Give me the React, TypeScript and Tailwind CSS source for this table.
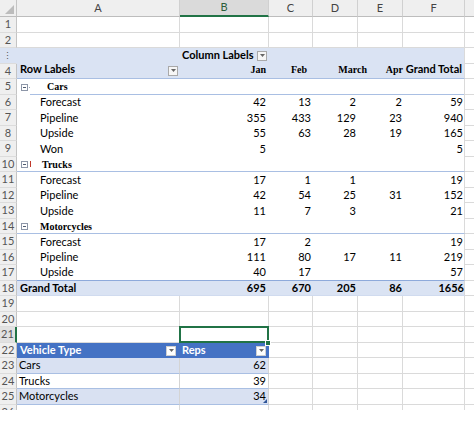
import React from "react";

// column widths A..F
const COLS = ["w-[163px]", "w-[89px]", "w-[44px]", "w-[45px]", "w-[45px]", "w-[62px]"];
const VW = ["w-[89px]", "w-[44px]", "w-[45px]", "w-[45px]", "w-[62px]"];
const PR = ["pr-[3px]", "pr-[2px]", "pr-[2px]", "pr-[1px]", "pr-[1px]"];
const serif = "font-['Liberation_Serif','Times_New_Roman',serif] font-bold text-[10px] leading-[11px]";

function Drop({ className = "", white = false }: { className?: string; white?: boolean }) {
  return (
    <span
      className={`flex h-[10px] w-[10px] shrink-0 items-center justify-center border ${
        white ? "border-[#d0d0d0] bg-white" : "border-[#a9a9a9] bg-[#f6f6f6]"
      } ${className}`}
    >
      <svg width="5" height="3" viewBox="0 0 5 3">
        <path d="M0 0h5L2.5 3z" fill="#666" />
      </svg>
    </span>
  );
}

function Minus() {
  return (
    <span className="flex h-[7px] w-[7px] items-center justify-center border border-[#8d96a8] bg-white">
      <span className="h-px w-[3px] bg-[#4f5b70]" />
    </span>
  );
}

interface RowProps {
  readonly n: number;
  readonly children: React.ReactNode;
  readonly head?: string;
  readonly headText?: React.ReactNode;
}

function Row({ n, children, head = "bg-[#efefef] border-r-[#c4c4c4]", headText }: RowProps) {
  return (
    <div className={`flex ${n % 2 ? "h-[16px]" : "h-[15px]"}`}>
      <div
        className={`flex w-[17px] shrink-0 items-center justify-center border-r border-b border-b-[#dcdcdc] text-[11px] text-[#555] ${head}`}
      >
        {headText ?? n}
      </div>
      {children}
      <div className="flex-1 border-b border-[#dadada]" />
    </div>
  );
}

function Grid() {
  return (
    <>
      {COLS.map((w, i) => (
        <div key={i} className={`${w} shrink-0 border-r border-b border-[#dadada]`} />
      ))}
    </>
  );
}

interface DataProps {
  readonly n: number;
  readonly label: string;
  readonly vals: string[];
  readonly line?: string;
}

function DataRow({ n, label, vals, line = "" }: DataProps) {
  return (
    <Row n={n}>
      <div className={`flex w-[163px] shrink-0 items-center pl-[23px] ${line}`}>{label}</div>
      {vals.map((v, i) => (
        <div
          key={i}
          className={`flex ${VW[i]} shrink-0 items-center justify-end ${PR[i]} ${line} ${
            i === 4 ? "border-r border-r-[#dadada]" : ""
          }`}
        >
          {v}
        </div>
      ))}
    </Row>
  );
}

function ColHeader() {
  const letters = ["A", "B", "C", "D", "E", "F"];
  return (
    <div className="flex h-[17px] text-[11px] text-[#444]">
      <div className="relative w-[17px] shrink-0 border-r border-b border-r-[#c4c4c4] border-b-[#bdbdbd] bg-[#efefef]">
        <svg className="absolute bottom-[2px] right-[2px]" width="9" height="9" viewBox="0 0 9 9">
          <path d="M0 9L9 0v9z" fill="#bcbcbc" />
        </svg>
      </div>
      {letters.map((l, i) => (
        <div
          key={l}
          className={`flex ${COLS[i]} shrink-0 items-center justify-center border-r border-r-[#d0d0d0] ${
            l === "B"
              ? "border-b-2 border-b-[#217346] bg-[#dadada] text-[#2b5d3a]"
              : "border-b border-b-[#bdbdbd] bg-[#efefef]"
          }`}
        >
          {l}
        </div>
      ))}
      <div className="flex-1 border-b border-b-[#bdbdbd] bg-[#efefef]" />
    </div>
  );
}

export default function App() {
  const blueLine = "border-b border-b-[#a9bfe3]";
  return (
    <div className="h-[434px] w-[474px] overflow-hidden bg-white font-['Lato','Noto_Sans',sans-serif] text-[11px] text-black">
      <div className="h-[410px] overflow-hidden">
        <ColHeader />
        <Row n={1}>
          <Grid />
        </Row>
        <Row n={2}>
          <Grid />
        </Row>

        {/* pivot header */}
        <Row
          n={3}
          head="bg-[#dae3f3] border-r-[#dae3f3] justify-start pl-[3px]"
          headText={<span className="text-[9px] leading-none">⋮</span>}
        >
          <div className="flex w-[448px] shrink-0 border-r border-r-[#dadada] bg-[#dae3f3]">
            <div className="w-[163px] shrink-0" />
            <div className="flex w-[89px] shrink-0 items-end pb-[1px] pl-[2px] font-bold">
              Column Labels
              <Drop className="mr-[2px] ml-auto self-center" />
            </div>
          </div>
        </Row>
        <Row n={4}>
          <div className={`flex w-[448px] shrink-0 border-r border-r-[#dadada] bg-[#dae3f3] ${blueLine}`}>
            <div className="flex w-[163px] shrink-0 items-end pb-[1px] pl-[3px] font-bold">
              Row Labels
              <Drop className="mr-[2px] ml-auto self-center" />
            </div>
            <div className={`flex w-[89px] shrink-0 items-start justify-end pr-[3px] ${serif}`}>Jan</div>
            <div className={`flex w-[44px] shrink-0 items-start justify-end pr-[6px] ${serif}`}>Feb</div>
            <div className={`flex w-[45px] shrink-0 items-start justify-end ${serif}`}>
              <span className="relative z-[1] -mr-[9px]">March</span>
            </div>
            <div className={`flex w-[45px] shrink-0 items-start justify-end ${serif}`}>Apr</div>
            <div className="flex w-[61px] shrink-0 items-end justify-end pr-[2px] pb-[1px] font-bold">
              Grand Total
            </div>
          </div>
        </Row>

        {/* Cars */}
        <Row n={5}>
          <div className="flex w-[448px] shrink-0 border-r border-r-[#dadada]">
            <div className="flex h-full w-[13px] shrink-0 items-center pl-[4px]">
              <Minus />
              <span className="ml-[1px] h-px w-px bg-[#9aa3b5]" />
            </div>
            <div className={`flex h-full w-[150px] shrink-0 items-center pl-[17px] ${blueLine}`}>
              <span className={serif}>Cars</span>
            </div>
            <div className={`h-full flex-1 ${blueLine}`} />
          </div>
        </Row>
        <DataRow n={6} label="Forecast" vals={["42", "13", "2", "2", "59"]} />
        <DataRow n={7} label="Pipeline" vals={["355", "433", "129", "23", "940"]} />
        <DataRow n={8} label="Upside" vals={["55", "63", "28", "19", "165"]} />
        <DataRow n={9} label="Won" vals={["5", "", "", "", "5"]} />

        {/* Trucks */}
        <Row n={10}>
          <div className={`flex w-[448px] shrink-0 items-center border-r border-r-[#dadada] ${blueLine}`}>
            <span className="ml-[4px]">
              <Minus />
            </span>
            <span className="ml-[2px] h-[6px] w-px bg-[#c0392b]" />
            <span className={`ml-[11px] ${serif}`}>Trucks</span>
          </div>
        </Row>
        <DataRow n={11} label="Forecast" vals={["17", "1", "1", "", "19"]} />
        <DataRow n={12} label="Pipeline" vals={["42", "54", "25", "31", "152"]} />
        <DataRow n={13} label="Upside" vals={["11", "7", "3", "", "21"]} />

        {/* Motorcycles */}
        <Row n={14}>
          <div className={`flex w-[448px] shrink-0 items-center border-r border-r-[#dadada] ${blueLine}`}>
            <span className="ml-[4px]">
              <Minus />
            </span>
            <span className={`ml-[12px] ${serif}`}>Motorcycles</span>
          </div>
        </Row>
        <DataRow n={15} label="Forecast" vals={["17", "2", "", "", "19"]} />
        <DataRow n={16} label="Pipeline" vals={["111", "80", "17", "11", "219"]} />
        <DataRow n={17} label="Upside" vals={["40", "17", "", "", "57"]} line="border-b border-b-[#8eaadb]" />

        {/* grand total */}
        <Row n={18}>
          <div className="flex w-[448px] shrink-0 border-r border-b border-r-[#dadada] border-b-[#d0dbef] bg-[#dae3f3] font-bold">
            <div className="flex w-[163px] shrink-0 items-center pl-[3px]">Grand Total</div>
            {["695", "670", "205", "86", "1656"].map((v, i) => (
              <div key={i} className={`flex ${VW[i]} shrink-0 items-center justify-end ${PR[i]}`}>
                {v}
              </div>
            ))}
          </div>
        </Row>

        <Row n={19}>
          <Grid />
        </Row>
        <Row n={20}>
          <Grid />
        </Row>
        <Row n={21} head="bg-[#e1e1e1] border-r-2 border-r-[#217346] text-[#3f6e4d]">
          <div className="w-[163px] shrink-0 border-r border-b border-[#dadada]" />
          <div className="relative w-[89px] shrink-0 border-r border-b border-[#dadada]">
            <div className="absolute -top-[1px] -right-[1px] -bottom-[1px] -left-[1px] z-10 border-2 border-[#217346]" />
            <div className="absolute -right-[3px] -bottom-[4px] z-20 h-[6px] w-[6px] border border-white bg-[#217346]" />
          </div>
          {COLS.slice(2).map((w, i) => (
            <div key={i} className={`${w} shrink-0 border-r border-b border-[#dadada]`} />
          ))}
        </Row>

        {/* table */}
        <Row n={22}>
          <div className="flex w-[163px] shrink-0 items-center bg-[#4472c4] pl-[3px] font-bold text-white">
            Vehicle Type
            <Drop white className="mr-[4px] ml-auto" />
          </div>
          <div className="flex w-[89px] shrink-0 items-center bg-[#4472c4] pl-[2px] font-bold text-white">
            Reps
            <Drop white className="mr-[3px] ml-auto" />
          </div>
          {COLS.slice(2).map((w, i) => (
            <div key={i} className={`${w} shrink-0 border-r border-b border-[#dadada]`} />
          ))}
        </Row>
        {[
          ["Cars", "62", true],
          ["Trucks", "39", false],
          ["Motorcycles", "34", true],
        ].map(([label, v, band], i) => (
          <Row key={i} n={23 + i}>
            <div
              className={`flex w-[163px] shrink-0 items-center border-r border-r-[#d4d4d4] pl-[2px] ${blueLine} ${
                band ? "bg-[#d9e1f2]" : "bg-white"
              }`}
            >
              {label}
            </div>
            <div
              className={`relative flex w-[89px] shrink-0 items-center justify-end border-r border-r-[#d4d4d4] pr-[2px] ${blueLine} ${
                band ? "bg-[#d9e1f2]" : "bg-white"
              }`}
            >
              {v}
              {i === 2 && (
                <svg className="absolute right-[1px] bottom-[1px]" width="4" height="4" viewBox="0 0 4 4">
                  <path d="M0 4L4 0v4z" fill="#2f5597" />
                </svg>
              )}
            </div>
            {COLS.slice(2).map((w, j) => (
              <div key={j} className={`${w} shrink-0 border-r border-b border-[#dadada]`} />
            ))}
          </Row>
        ))}
        <Row n={26}>
          <Grid />
        </Row>
      </div>
    </div>
  );
}
